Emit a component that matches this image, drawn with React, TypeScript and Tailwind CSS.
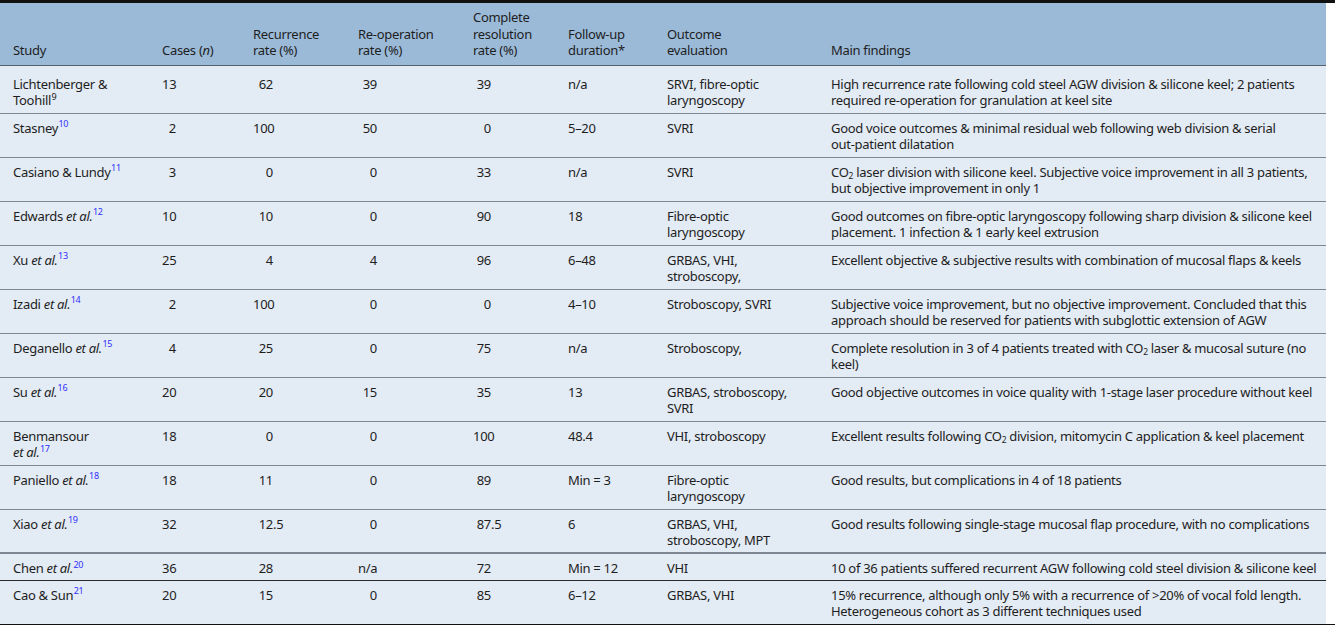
import type { ReactNode } from "react";

type Row = {
  study: ReactNode[]; // lines
  cases: string;
  recurrence: string;
  reop: string;
  complete: string;
  followUp: string;
  outcome: string[];
  findings: ReactNode[];
  h: string; // row height class
  pt: string;
  border: string;
};

const EtAl = () => <i>et al.</i>;
const Ref = ({ n, dark }: { n: number; dark?: boolean }) => (
  <sup
    className={`text-[9px] -top-[5.5px] ml-[0.5px] ${dark ? "text-[#222]" : "text-[#3030ff]"}`}
  >
    {n}
  </sup>
);
const CO2 = () => (
  <>
    CO<sub className="text-[8.5px]">2</sub>
  </>
);

const line = "border-b border-[#7c8793]";

const rows: Row[] = [
  {
    study: [<>Lichtenberger &amp;</>, <>Toohill<Ref n={9} dark /></>],
    cases: "13",
    recurrence: "62",
    reop: "39",
    complete: "39",
    followUp: "n/a",
    outcome: ["SRVI, fibre-optic", "laryngoscopy"],
    findings: [
      "High recurrence rate following cold steel AGW division & silicone keel; 2 patients",
      "required re-operation for granulation at keel site",
    ],
    h: "h-[48px]",
    pt: "pt-[10px]",
    border: line,
  },
  {
    study: [<>Stasney<Ref n={10} /></>],
    cases: "2",
    recurrence: "100",
    reop: "50",
    complete: "0",
    followUp: "5–20",
    outcome: ["SVRI"],
    findings: [
      "Good voice outcomes & minimal residual web following web division & serial",
      "out-patient dilatation",
    ],
    h: "h-[44px]",
    pt: "pt-[6px]",
    border: line,
  },
  {
    study: [<>Casiano &amp; Lundy<Ref n={11} /></>],
    cases: "3",
    recurrence: "0",
    reop: "0",
    complete: "33",
    followUp: "n/a",
    outcome: ["SVRI"],
    findings: [
      <>
        <CO2 /> laser division with silicone keel. Subjective voice improvement in all 3 patients,
      </>,
      "but objective improvement in only 1",
    ],
    h: "h-[44px]",
    pt: "pt-[6px]",
    border: line,
  },
  {
    study: [<>Edwards <EtAl /><Ref n={12} /></>],
    cases: "10",
    recurrence: "10",
    reop: "0",
    complete: "90",
    followUp: "18",
    outcome: ["Fibre-optic", "laryngoscopy"],
    findings: [
      "Good outcomes on fibre-optic laryngoscopy following sharp division & silicone keel",
      "placement. 1 infection & 1 early keel extrusion",
    ],
    h: "h-[44px]",
    pt: "pt-[6px]",
    border: line,
  },
  {
    study: [<>Xu <EtAl /><Ref n={13} /></>],
    cases: "25",
    recurrence: "4",
    reop: "4",
    complete: "96",
    followUp: "6–48",
    outcome: ["GRBAS, VHI,", "stroboscopy,"],
    findings: [
      "Excellent objective & subjective results with combination of mucosal flaps & keels",
    ],
    h: "h-[44px]",
    pt: "pt-[6px]",
    border: line,
  },
  {
    study: [<>Izadi <EtAl /><Ref n={14} /></>],
    cases: "2",
    recurrence: "100",
    reop: "0",
    complete: "0",
    followUp: "4–10",
    outcome: ["Stroboscopy, SVRI"],
    findings: [
      "Subjective voice improvement, but no objective improvement. Concluded that this",
      "approach should be reserved for patients with subglottic extension of AGW",
    ],
    h: "h-[44px]",
    pt: "pt-[6px]",
    border: line,
  },
  {
    study: [<>Deganello <EtAl /><Ref n={15} /></>],
    cases: "4",
    recurrence: "25",
    reop: "0",
    complete: "75",
    followUp: "n/a",
    outcome: ["Stroboscopy,"],
    findings: [
      <>
        Complete resolution in 3 of 4 patients treated with <CO2 /> laser &amp; mucosal suture (no
      </>,
      "keel)",
    ],
    h: "h-[44px]",
    pt: "pt-[6px]",
    border: line,
  },
  {
    study: [<>Su <EtAl /><Ref n={16} /></>],
    cases: "20",
    recurrence: "20",
    reop: "15",
    complete: "35",
    followUp: "13",
    outcome: ["GRBAS, stroboscopy,", "SVRI"],
    findings: [
      "Good objective outcomes in voice quality with 1-stage laser procedure without keel",
    ],
    h: "h-[44px]",
    pt: "pt-[6px]",
    border: line,
  },
  {
    study: ["Benmansour", <><EtAl /><Ref n={17} /></>],
    cases: "18",
    recurrence: "0",
    reop: "0",
    complete: "100",
    followUp: "48.4",
    outcome: ["VHI, stroboscopy"],
    findings: [
      <>
        Excellent results following <CO2 /> division, mitomycin C application &amp; keel placement
      </>,
    ],
    h: "h-[44px]",
    pt: "pt-[6px]",
    border: line,
  },
  {
    study: [<>Paniello <EtAl /><Ref n={18} /></>],
    cases: "18",
    recurrence: "11",
    reop: "0",
    complete: "89",
    followUp: "Min = 3",
    outcome: ["Fibre-optic", "laryngoscopy"],
    findings: ["Good results, but complications in 4 of 18 patients"],
    h: "h-[44px]",
    pt: "pt-[6px]",
    border: line,
  },
  {
    study: [<>Xiao <EtAl /><Ref n={19} /></>],
    cases: "32",
    recurrence: "12.5",
    reop: "0",
    complete: "87.5",
    followUp: "6",
    outcome: ["GRBAS, VHI,", "stroboscopy, MPT"],
    findings: [
      "Good results following single-stage mucosal flap procedure, with no complications",
    ],
    h: "h-[44px]",
    pt: "pt-[6px]",
    border: "border-b-2 border-[#7c8793]",
  },
  {
    study: [<>Chen <EtAl /><Ref n={20} /></>],
    cases: "36",
    recurrence: "28",
    reop: "n/a",
    complete: "72",
    followUp: "Min = 12",
    outcome: ["VHI"],
    findings: [
      "10 of 36 patients suffered recurrent AGW following cold steel division & silicone keel",
    ],
    h: "h-[27px]",
    pt: "pt-[6px]",
    border: "border-b border-[#2a2a2a]",
  },
  {
    study: [<>Cao &amp; Sun<Ref n={21} /></>],
    cases: "20",
    recurrence: "15",
    reop: "0",
    complete: "85",
    followUp: "6–12",
    outcome: ["GRBAS, VHI"],
    findings: [
      "15% recurrence, although only 5% with a recurrence of >20% of vocal fold length.",
      "Heterogeneous cohort as 3 different techniques used",
    ],
    h: "h-[44px]",
    pt: "pt-[6px]",
    border: "",
  },
];

function Num({ v, w }: { v: string; w: string }) {
  const [int, frac] = v.split(".");
  return (
    <span className="whitespace-nowrap">
      <span className={`inline-block text-right ${w}`}>{int}</span>
      {frac !== undefined && <span>.{frac}</span>}
    </span>
  );
}

function Lines({ items }: { items: ReactNode[] }) {
  return (
    <>
      {items.map((it, i) => (
        <div key={i} className="whitespace-nowrap">
          {it}
        </div>
      ))}
    </>
  );
}

export default function App() {
  return (
    <div
      className="w-[1335px] bg-white border-t-[3px] border-b-2 border-[#111] text-[13px] leading-[16.5px] tracking-[-0.3px] text-[#1e1e1e]"
      style={{ fontFamily: '"Noto Sans", "Open Sans", sans-serif' }}
    >
      <table className="w-[1326px] table-fixed border-collapse bg-[#e3ebf4]">
        <colgroup>
          <col className="w-[149px]" />
          <col className="w-[91px]" />
          <col className="w-[105px]" />
          <col className="w-[115px]" />
          <col className="w-[95px]" />
          <col className="w-[99px]" />
          <col className="w-[164px]" />
          <col className="w-[508px]" />
        </colgroup>
        <thead>
          <tr className="h-[62px] bg-[#9bbad8] border-b border-[#56616d]">
            {[
              ["Study"],
              [<>Cases (<i>n</i>)</>],
              ["Recurrence", "rate (%)"],
              ["Re-operation", "rate (%)"],
              ["Complete", "resolution", "rate (%)"],
              ["Follow-up", "duration*"],
              ["Outcome", "evaluation"],
              ["Main findings"],
            ].map((h, i) => (
              <th
                key={i}
                className="align-bottom text-left font-normal pl-[13px] pb-[6px]"
              >
                <Lines items={h} />
              </th>
            ))}
          </tr>
        </thead>
        <tbody>
          {rows.map((r, i) => (
            <tr key={i} className={`${r.h} ${r.border}`}>
              <td className={`align-top pl-[13px] ${r.pt}`}>
                <Lines items={r.study} />
              </td>
              <td className={`align-top pl-[13px] ${r.pt}`}>
                <Num v={r.cases} w="w-[14px]" />
              </td>
              <td className={`align-top pl-[13px] ${r.pt}`}>
                <Num v={r.recurrence} w="w-[20px]" />
              </td>
              <td className={`align-top pl-[13px] ${r.pt}`}>
                <Num v={r.reop} w="w-[19px]" />
              </td>
              <td className={`align-top pl-[13px] ${r.pt}`}>
                <Num v={r.complete} w="w-[18px]" />
              </td>
              <td className={`align-top pl-[13px] ${r.pt} whitespace-nowrap`}>
                {r.followUp}
              </td>
              <td className={`align-top pl-[13px] ${r.pt}`}>
                <Lines items={r.outcome} />
              </td>
              <td className={`align-top pl-[13px] ${r.pt}`}>
                <Lines items={r.findings} />
              </td>
            </tr>
          ))}
        </tbody>
      </table>
    </div>
  );
}
